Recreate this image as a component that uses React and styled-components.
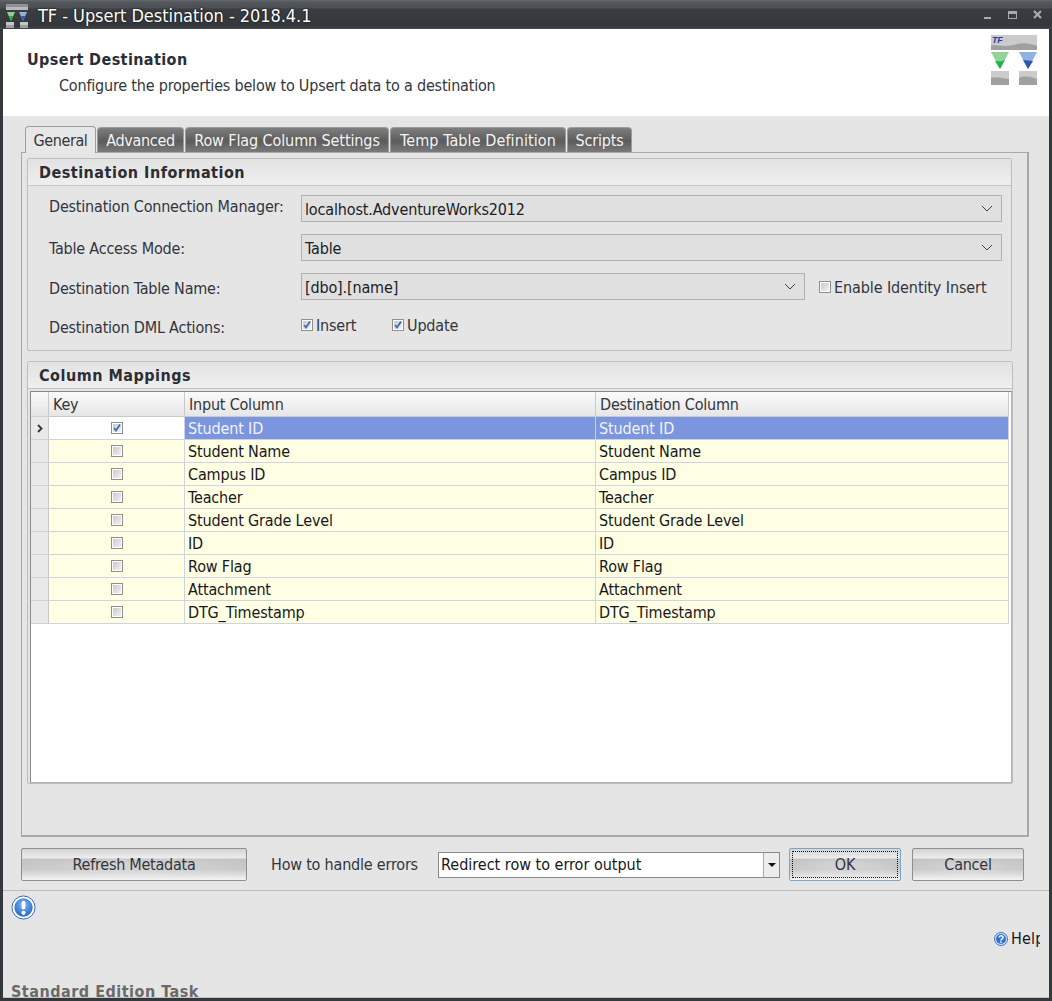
import styled, { createGlobalStyle } from 'styled-components';

const GlobalStyle = createGlobalStyle`
  html, body {
    margin: 0;
    padding: 0;
    height: 1001px;
    overflow: hidden;
    background: #35383c;
  }
  * {
    box-sizing: border-box;
  }
`;

const columns = ['Key', 'Input Column', 'Destination Column'];
const rows = [
  'Student ID',
  'Student Name',
  'Campus ID',
  'Teacher',
  'Student Grade Level',
  'ID',
  'Row Flag',
  'Attachment',
  'DTG_Timestamp',
];
const tabs = [
  { label: 'General', width: 71, spacing: -0.4 },
  { label: 'Advanced', width: 87, spacing: -0.3 },
  { label: 'Row Flag Column Settings', width: 204, spacing: -0.1 },
  { label: 'Temp Table Definition', width: 176, spacing: 0.1 },
  { label: 'Scripts', width: 65, spacing: -0.15 },
];

function WindowIcon() {
  return (
    <svg width="23" height="24" viewBox="0 0 23 24">
      <rect x="0" y="0" width="22" height="3" fill="#8f9092" />
      <rect x="0" y="3" width="22" height="3" fill="#b9b9b9" />
      <path d="M1 8h8l-4 9z" fill="#8fd08f" />
      <path d="M3 12h4l-2 5z" fill="#22b24c" />
      <path d="M13 8h8l-4 9z" fill="#8fb0e0" />
      <path d="M15 12h4l-2 5z" fill="#2f5cb0" />
      <rect x="0" y="18" width="8" height="6" fill="#c6c6c6" />
      <rect x="0" y="21" width="8" height="3" fill="#9d9d9d" />
      <rect x="14" y="18" width="8" height="6" fill="#c6c6c6" />
      <rect x="14" y="21" width="8" height="3" fill="#9d9d9d" />
    </svg>
  );
}

function Logo() {
  return (
    <svg width="48" height="52" viewBox="0 0 48 52">
      <rect x="1" y="0" width="46" height="15" fill="#cbcbcb" />
      <path d="M1 10c10 0 14 2 22 0s14-3 24 1v4H1z" fill="#a0a0a0" />
      <text x="2" y="8" fontFamily="Liberation Sans, sans-serif" fontSize="9" fontWeight="700" fontStyle="italic" fill="#2b3a9c">TF</text>
      <path d="M1 17h18l-9 17z" fill="#93d39a" />
      <path d="M5 26c4 0 7 1 10-1l-5 9z" fill="#22b24c" />
      <path d="M29 17h18l-9 17z" fill="#8fb2e4" />
      <path d="M33 25c4 0 7 1 10 1l-5 8z" fill="#2b58ac" />
      <rect x="1" y="36" width="18" height="14" fill="#cbcbcb" />
      <path d="M1 43c6-1 12 0 18 1v6H1z" fill="#a0a0a0" />
      <rect x="29" y="36" width="18" height="14" fill="#cbcbcb" />
      <path d="M29 43c6-3 12-1 18 1v6H29z" fill="#a0a0a0" />
    </svg>
  );
}

function Chevron() {
  return (
    <svg width="12" height="7" viewBox="0 0 12 7">
      <path d="M1 1l5 5 5-5" fill="none" stroke="#444" strokeWidth="1" />
    </svg>
  );
}

function InfoIcon() {
  return (
    <svg width="25" height="25" viewBox="0 0 26 26">
      <defs>
        <radialGradient id="infoFill" cx="50%" cy="35%" r="70%">
          <stop offset="0" stopColor="#7fb6f4" />
          <stop offset="1" stopColor="#1f62c8" />
        </radialGradient>
      </defs>
      <circle cx="13" cy="13" r="12" fill="#fff" stroke="#2a66c0" strokeWidth="1" />
      <circle cx="13" cy="13" r="9.500" fill="url(#infoFill)" />
      <rect x="11" y="6" width="4" height="9" rx="2" fill="#fff" />
      <circle cx="13" cy="18.500" r="2.200" fill="#fff" />
    </svg>
  );
}

function HelpIcon() {
  return (
    <svg width="14" height="14" viewBox="0 0 14 14">
      <circle cx="7" cy="7" r="6.500" fill="#d8e6f8" stroke="#3a72c4" strokeWidth="1" />
      <circle cx="7" cy="7" r="5" fill="#2f6fd0" />
      <text x="7" y="10.500" textAnchor="middle" fontFamily="Liberation Sans, sans-serif" fontSize="10" fontWeight="700" fill="#fff">?</text>
    </svg>
  );
}

function WindowButtons() {
  return (
    <svg width="59" height="14" viewBox="0 0 59 14">
      <rect x="0" y="8" width="7" height="2" fill="#a9abae" />
      <rect x="24.500" y="2.500" width="8" height="7" fill="none" stroke="#a9abae" strokeWidth="1" />
      <rect x="24" y="2" width="9" height="3" fill="#a9abae" />
      <path d="M50 2l7 7M57 2l-7 7" stroke="#a9abae" strokeWidth="2.200" fill="none" />
    </svg>
  );
}

function Check({ checked }) {
  return (
    <CheckBox>
      {checked && (
        <svg width="10" height="10" viewBox="0 0 10 10">
          <path d="M2 5l2 2.500 4-6" fill="none" stroke="#3a6fb8" strokeWidth="1.800" />
        </svg>
      )}
    </CheckBox>
  );
}

export default function App() {
  return (
    <Frame>
      <GlobalStyle />
      <TitleBar>
        <TitleGroup>
          <WindowIcon />
          <TitleText>TF - Upsert Destination - 2018.4.1</TitleText>
        </TitleGroup>
        <WindowButtons />
      </TitleBar>
      <Client>
        <Header>
          <div>
            <HeaderTitle>Upsert Destination</HeaderTitle>
            <HeaderSubtitle>Configure the properties below to Upsert data to a destination</HeaderSubtitle>
          </div>
          <Logo />
        </Header>
        <Main>
          <TabStrip>
            {tabs.map((tab, index) => (
              <Tab key={tab.label} $width={tab.width} $spacing={tab.spacing} $active={index === 0}>{tab.label}</Tab>
            ))}
          </TabStrip>
          <TabPanel>
            <GroupBox>
              <GroupTitle>Destination Information</GroupTitle>
              <FormGrid>
                <FieldLabel $shift="-2px">Destination Connection Manager:</FieldLabel>
                <Select>
                  <SelectText>localhost.AdventureWorks2012</SelectText>
                  <Chevron />
                </Select>
                <FieldLabel $shift="1px">Table Access Mode:</FieldLabel>
                <Select>
                  <SelectText>Table</SelectText>
                  <Chevron />
                </Select>
                <FieldLabel $shift="2px">Destination Table Name:</FieldLabel>
                <FieldRow>
                  <Select $width="504px">
                    <SelectText>[dbo].[name]</SelectText>
                    <Chevron />
                  </Select>
                  <IdentityLabel>
                    <Check />
                    Enable Identity Insert
                  </IdentityLabel>
                </FieldRow>
                <FieldLabel $shift="2px">Destination DML Actions:</FieldLabel>
                <ActionRow>
                  <CheckLabel>
                    <Check checked />
                    Insert
                  </CheckLabel>
                  <CheckLabel>
                    <Check checked />
                    Update
                  </CheckLabel>
                </ActionRow>
              </FormGrid>
            </GroupBox>
            <MappingBox>
              <GroupTitle>Column Mappings</GroupTitle>
              <GridFrame>
                <GridRow $header>
                  <RowHeader $corner />
                  {columns.map((col) => (
                    <HeaderCell key={col}>{col}</HeaderCell>
                  ))}
                </GridRow>
                {rows.map((row, index) => (
                  <GridRow key={row}>
                    <RowHeader>
                      {index === 0 && (
                        <svg width="6" height="9" viewBox="0 0 6 9">
                          <path d="M1 1l3.500 3.500L1 8" fill="none" stroke="#333" strokeWidth="1.800" />
                        </svg>
                      )}
                    </RowHeader>
                    <KeyCell $current={index === 0}>
                      <Check checked={index === 0} />
                    </KeyCell>
                    <DataCell $current={index === 0}>{row}</DataCell>
                    <DataCell $current={index === 0}>{row}</DataCell>
                  </GridRow>
                ))}
              </GridFrame>
            </MappingBox>
          </TabPanel>
          <ActionBar>
            <GlossButton $width="226px">Refresh Metadata</GlossButton>
            <ErrorLabel>How to handle errors</ErrorLabel>
            <ComboBox>
              <ComboText>Redirect row to error output</ComboText>
              <ComboArrow />
            </ComboBox>
            <GlossButton $width="112px" $default>
              <FocusRing>OK</FocusRing>
            </GlossButton>
            <GlossButton $width="112px">Cancel</GlossButton>
          </ActionBar>
        </Main>
        <Footer>
          <InfoSlot>
            <InfoIcon />
          </InfoSlot>
          <HelpRow>
            <HelpIcon />
            <HelpText>Help</HelpText>
          </HelpRow>
          <EditionText>Standard Edition Task</EditionText>
        </Footer>
      </Client>
    </Frame>
  );
}

const uiFont = `"DejaVu Sans", "Noto Sans", sans-serif`;

const Frame = styled.div`
  width: 1052px;
  height: 1001px;
  display: flex;
  flex-direction: column;
  padding: 0 3px 3px 3px;
  background: #34373b;
  font-family: ${uiFont};
  font-stretch: condensed;
  font-size: 16px;
  letter-spacing: -0.2px;
  color: #2f2f35;
  overflow: hidden;
`;

const TitleBar = styled.div`
  height: 29px;
  flex: none;
  margin: 0 -3px;
  padding: 2px 9px 0 6px;
  display: flex;
  align-items: center;
  justify-content: space-between;
  background: linear-gradient(#66696e 0, #55585c 2px, #4b4e53 8px, #3a3d41 9px, #34373b 26px, #44474b 100%);
`;

const TitleGroup = styled.div`
  display: flex;
  align-items: center;
  gap: 9px;
`;

const TitleText = styled.span`
  color: #fff;
  font-size: 18px;
  letter-spacing: -0.05px;
  text-shadow: 0 0 2px #000;
`;

const Client = styled.div`
  flex: 1;
  min-height: 0;
  display: flex;
  flex-direction: column;
  background: #e5e5e5;
`;

const Header = styled.div`
  height: 87px;
  flex: none;
  display: flex;
  justify-content: space-between;
  padding: 6px 11px 0 24px;
  background: #fff;
`;

const HeaderTitle = styled.div`
  margin-top: 15px;
  font-size: 16px;
  font-weight: 700;
  letter-spacing: 0.4px;
  line-height: 20px;
  color: #2a2e38;
`;

const HeaderSubtitle = styled.div`
  margin-top: 6px;
  padding-left: 32px;
  line-height: 20px;
  color: #33353d;
`;

const Main = styled.div`
  padding: 10px 20px 0 18px;
`;

const TabStrip = styled.div`
  display: flex;
  align-items: flex-end;
  gap: 1px;
  height: 26px;
  padding-left: 4px;
  position: relative;
  z-index: 1;
`;

const Tab = styled.div`
  width: ${(p) => p.$width}px;
  height: ${(p) => (p.$active ? '27px' : '25px')};
  margin-bottom: ${(p) => (p.$active ? '-1px' : '0')};
  display: flex;
  align-items: center;
  justify-content: center;
  letter-spacing: ${(p) => p.$spacing}px;
  border: 1px solid #9c9c9c;
  border-bottom: 0;
  border-radius: 4px 4px 0 0;
  color: ${(p) => (p.$active ? '#33353d' : '#f4f4f4')};
  background: ${(p) => (p.$active ? '#e7e7e7' : 'linear-gradient(#7e7e7e, #5c5c5c 55%, #7a7a7a)')};
`;

const TabPanel = styled.div`
  height: 685px;
  padding: 5px 15px 0 5px;
  display: flex;
  flex-direction: column;
  gap: 10px;
  border: 1px solid #a9a9a9;
  border-right-width: 2px;
  border-bottom-width: 2px;
`;

const GroupBox = styled.section`
  height: 193px;
  flex: none;
  border: 1px solid #bdbdbd;
  border-radius: 2px;
`;

const MappingBox = styled(GroupBox)`
  height: 423px;
  margin-right: -1px;
  display: flex;
  flex-direction: column;
`;

const GroupTitle = styled.h2`
  height: 27px;
  margin: 0;
  padding: 0 11px;
  display: flex;
  align-items: center;
  flex: none;
  font-size: 16px;
  font-weight: 700;
  letter-spacing: 0.5px;
  color: #2d2d33;
  border-bottom: 1px solid #c4c4c4;
  background: linear-gradient(#e2e2e2, #efefef);
`;

const FormGrid = styled.div`
  padding: 9px 9px 0 21px;
  display: grid;
  grid-template-columns: 252px 1fr;
  grid-auto-rows: 26px;
  row-gap: 13px;
  align-items: center;
`;

const FieldLabel = styled.div`
  color: #33353d;
  transform: translateY(${(p) => p.$shift});
`;

const Select = styled.div`
  height: 27px;
  width: ${(p) => p.$width || '100%'};
  padding: 0 8px 0 3px;
  display: flex;
  align-items: center;
  justify-content: space-between;
  border: 1px solid #b0b0b0;
  background: #e0e0e0;
  color: #202024;
`;

const SelectText = styled.span`
  letter-spacing: -0.15px;
  padding-top: 2px;
`;

const FieldRow = styled.div`
  display: flex;
  align-items: center;
  gap: 14px;
`;

const ActionRow = styled.div`
  display: flex;
  align-items: center;
  gap: 36px;
`;

const CheckLabel = styled.label`
  display: flex;
  align-items: center;
  gap: 3px;
  color: #33353d;
`;

const IdentityLabel = styled(CheckLabel)`
  padding-top: 2px;
  letter-spacing: -0.1px;
`;

const CheckBox = styled.span`
  width: 12px;
  height: 12px;
  flex: none;
  display: inline-flex;
  align-items: center;
  justify-content: center;
  border: 1px solid #8f8f8f;
  box-shadow: inset 0 0 0 1px #fff;
  background: linear-gradient(135deg, #c6c6c6, #f5f5f5);
`;

const GridFrame = styled.div`
  flex: 1;
  margin: 2px 0 0 2px;
  background: #fff;
  border: 1px solid #b5b5b5;
  border-top-color: #8a8a8a;
  border-left-color: #8a8a8a;
`;

const GridRow = styled.div`
  height: ${(p) => (p.$header ? '25px' : '23px')};
  display: grid;
  grid-template-columns: 18px 136px 411px 413px;
`;

const RowHeader = styled.div`
  display: flex;
  align-items: center;
  justify-content: center;
  border-right: 1px solid #c9c9c9;
  border-bottom: 1px solid #cdd3e0;
  background: ${(p) => (p.$corner ? 'linear-gradient(#fafafa, #e4e4e4)' : '#e9e9e9')};
`;

const HeaderCell = styled.div`
  padding-left: 4px;
  display: flex;
  align-items: center;
  color: #33353d;
  border-right: 1px solid #c9c9c9;
  border-bottom: 1px solid #c9c9c9;
  background: linear-gradient(#fbfbfb, #e6e6e6);
`;

const KeyCell = styled.div`
  display: flex;
  align-items: center;
  justify-content: center;
  border-right: 1px solid #cdd3e0;
  border-bottom: 1px solid #cdd3e0;
  background: ${(p) => (p.$current ? '#fff' : '#ffffe3')};
`;

const DataCell = styled.div`
  padding-left: 3px;
  display: flex;
  align-items: center;
  letter-spacing: -0.15px;
  color: ${(p) => (p.$current ? '#f2f4fb' : '#17171b')};
  border-right: 1px solid #cdd3e0;
  border-bottom: 1px solid #cdd3e0;
  background: ${(p) => (p.$current ? '#7b95df' : '#ffffe3')};
`;

const ActionBar = styled.div`
  height: 53px;
  display: flex;
  align-items: center;
  padding-top: 2px;
`;

const GlossButton = styled.button`
  width: ${(p) => p.$width};
  height: 33px;
  flex: none;
  margin-right: 11px;
  padding: 2px;
  border: 1px solid ${(p) => (p.$default ? '#7aa7c9' : '#8f8f8f')};
  border-radius: 2px;
  font: inherit;
  letter-spacing: -0.25px;
  color: #33353d;
  background:
    radial-gradient(ellipse 60% 40% at 50% 55%, rgba(255, 255, 255, 0.3), transparent),
    linear-gradient(#d4d4d4 0, #ececec 9px, #c2c2c2 10px, #c6c6c6 20px, #ececec 29px, #f4f4f4 100%);

  &:last-child {
    margin-right: 0;
  }
`;

const FocusRing = styled.span`
  display: flex;
  height: 100%;
  align-items: center;
  justify-content: center;
  border: 1px dotted #111;
`;

const ErrorLabel = styled.span`
  flex: none;
  margin-left: 13px;
  width: 167px;
  color: #33353d;
`;

const ComboBox = styled.div`
  flex: none;
  width: 342px;
  height: 26px;
  margin-right: 9px;
  display: flex;
  border: 1px solid #8a8a8a;
  background: #fff;
`;

const ComboText = styled.div`
  flex: 1;
  padding-left: 2px;
  display: flex;
  align-items: center;
  letter-spacing: 0;
  color: #17171b;
`;

const ComboArrow = styled.div`
  width: 16px;
  display: flex;
  align-items: center;
  justify-content: center;
  border-left: 1px solid #aaa;
  background: #ececec;

  &::after {
    content: '';
    border-top: 4px solid #111;
    border-left: 4px solid transparent;
    border-right: 4px solid transparent;
  }
`;

const Footer = styled.footer`
  flex: 1;
  min-height: 0;
  display: flex;
  flex-direction: column;
  overflow: hidden;
  border-top: 1px solid #bcbcbc;
  border-bottom: 1px solid #c4c4c4;
  padding: 4px 0 0 8px;
`;

const InfoSlot = styled.div`
  height: 26px;
  flex: none;
`;

const HelpRow = styled.div`
  margin-top: 8px;
  padding-right: 9px;
  display: flex;
  align-items: center;
  justify-content: flex-end;
  gap: 3px;
  color: #17171b;
`;

const HelpText = styled.span`
  width: 29px;
  overflow: hidden;
  letter-spacing: 0.2px;
`;

const EditionText = styled.div`
  margin-top: 34px;
  align-self: flex-start;
  padding-right: 6px;
  font-size: 16px;
  font-weight: 700;
  letter-spacing: 0.5px;
  line-height: 20px;
  color: #6a6a6a;
  background: #e5e5e5;
`;
